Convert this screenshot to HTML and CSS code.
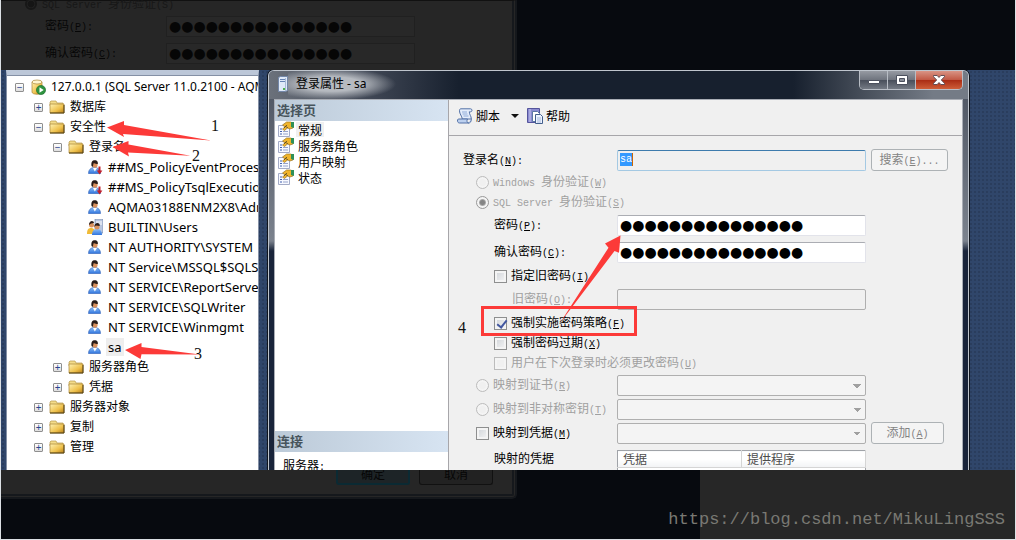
FILE: index.html
```
<!DOCTYPE html>
<html lang="zh-CN">
<head>
  <meta charset="UTF-8" />
  <title>登录属性 - sa</title>
  <link rel="stylesheet" href="styles.css">
</head>
<body>
  <!-- icons -->
  <svg class="defs" aria-hidden="true">
    <defs>
      <linearGradient id="gold" x1="0" y1="0" x2="1" y2="1">
        <stop offset="0" stop-color="#fff3b4" /><stop offset="0.6" stop-color="#eec04b" /><stop offset="1" stop-color="#b57b14" />
      </linearGradient>
      <linearGradient id="blue" x1="0" y1="0" x2="0" y2="1">
        <stop offset="0" stop-color="#8fc0f8" /><stop offset="1" stop-color="#2f74dd" />
      </linearGradient>
    </defs>
    <symbol id="folder" viewBox="0 0 16 16">
      <path d="M1 4V3l1-1h5l1 2h6v3H1z" fill="#f3dc8b" stroke="#b89a4a" stroke-width="0.7" />
      <path d="M1 5h14v9H1z" fill="url(#gold)" stroke="#a98434" stroke-width="0.7" />
      <path d="M1 14h14V6" fill="none" stroke="#4f3d12" />
    </symbol>
    <symbol id="server" viewBox="0 0 16 16">
      <path d="M2 3v10c0 3 10 3 10 0V3z" fill="url(#gold)" stroke="#a98434" stroke-width="0.7" />
      <ellipse cx="7" cy="3" rx="5" ry="2" fill="#fff6cf" stroke="#a98434" stroke-width="0.7" />
      <circle cx="11" cy="11" r="4.6" fill="#2f9440" stroke="#17692a" stroke-width="0.6" />
      <path d="M9.5 8.3v5.4l4.2-2.7z" fill="#fff" />
    </symbol>
    <symbol id="user" viewBox="0 0 16 16">
      <path d="M1.500 14.500c0-3.500 2-6 6-6s6 2.500 6 6z" fill="url(#blue)" stroke="#2a5db5" stroke-width="0.6" />
      <path d="M6 9l1.800 3.500L10 9z" fill="#fff" />
      <ellipse cx="8" cy="5.600" rx="2.600" ry="3.300" fill="#d9925f" />
      <path d="M4.500 7C4 3 5 1.200 8 1.200S11 4 10.800 5C9 5 7 3.500 6.500 4.500L5.800 8z" fill="#2a1c18" />
    </symbol>
    <symbol id="user-off" viewBox="0 0 16 16">
      <use href="#user" width="16" height="16" />
      <path d="M12.500 7.500v5" stroke="#c2202b" stroke-width="2" /><path d="M9.800 11.500h5.600l-2.800 4z" fill="#c2202b" />
    </symbol>
    <symbol id="group" viewBox="0 0 16 16">
      <path d="M8 0h8v14H8z" fill="#b9c6df" stroke="#6d7fa5" stroke-width="0.6" /><path d="M9 3h6M9 5h6" stroke="#fff" />
      <path d="M0 15c0-4 1-6 4-6s4 2 4 6z" fill="#f0bb38" /><circle cx="4.500" cy="6" r="2.500" fill="#d9925f" /><path d="M2 6c0-5 5-5 5-2l-3 .5z" fill="#2a1c18" />
      <path d="M5 16c0-4 2-6 5-6s5 2 5 6z" fill="url(#blue)" /><circle cx="10" cy="8" r="2.500" fill="#d9925f" /><path d="M7.300 8c0-5 6-5 5.500-1l-4-.5z" fill="#2a1c18" />
    </symbol>
    <symbol id="page" viewBox="0 0 16 16">
      <path d="M.5 4.500h11v11H.5z" fill="#f7f9ff" stroke="#a3abc6" />
      <path d="M2 8h2M2 10.500h2M2 13h2" stroke="#3f5fae" /><path d="M5 10.500h5M5 13h5" stroke="#96a3cb" />
      <path d="M4.500 4l4-3h4l2.500 1v5l-3 1-2.500-1-3 2.500-2-1.500 2.500-2z" fill="#f0b42c" stroke="#8b651a" stroke-width="0.6" />
      <path d="M13 1h3v6l-3-1z" fill="#2f9058" /><path d="M7 5l3 2M6 7l3-3" stroke="#58481f" stroke-width="0.8" />
    </symbol>
    <symbol id="script" viewBox="0 0 16 16">
      <path d="M3.500.8h10c2 0 2 3 0 3h-1.200c0 3 2 4 2 7.200h-9C5 8 2.500 6 2.500 3c0-1 .3-2.200 1-2.200z" fill="#e4edfb" stroke="#5371a6" />
      <path d="M1.500 11h9c-1 1.500-.5 4 1 4h-9c-2.500 0-2.500-4-1-4zM11 15c2 .5 3.500-1.500 3.300-4" fill="#bcd0ef" stroke="#5371a6" />
      <path d="M5 4h5M5.500 6h5M6.500 8h5" stroke="#8fabd8" />
    </symbol>
    <symbol id="help" viewBox="0 0 16 16">
      <path d="M.5.500h12v14H.5z" fill="#8b8bd0" stroke="#54549c" /><path d="M3 1v13" stroke="#c9c9ef" />
      <path d="M5.500 3.500h5l2 2v8h-7z" fill="#fff" stroke="#5d78a5" /><path d="M8.500 6.500h5l2 2v7h-7z" fill="#edf3ff" stroke="#435f8c" />
      <path d="M10 10h4M10 12h4M10 14h4" stroke="#8aa2cd" stroke-width="0.7" />
    </symbol>
  </svg>

  <div class="shade shade-top">
    <div class="ghost ghost-top">
      <div class="ghost-line ghost-radio"><span class="ring"></span><span><span class="en">SQL Server </span>身份验证<span class="en">(S)</span></span></div>
      <div class="ghost-line"><label for="oldPwd">密码<span class="en">(<u>P</u>):</span></label><input class="dots" id="oldPwd" type="text" value="●●●●●●●●●●●●●●●" readonly></div>
      <div class="ghost-line"><label for="oldPwd2">确认密码<span class="en">(<u>C</u>):</span></label><input class="dots" id="oldPwd2" type="text" value="●●●●●●●●●●●●●●●" readonly></div>
    </div>
  </div>

  <main class="stage">
    <aside class="explorer">
      <ul class="tree">
        <li class="l1"><button class="twist">−</button><svg><use href="#server" /></svg><span>127.0.0.1 (SQL Server 11.0.2100 - AQMA03188ENM2X8)</span></li>
        <li class="l2"><button class="twist">+</button><svg><use href="#folder" /></svg><span>数据库</span></li>
        <li class="l2"><button class="twist">−</button><svg><use href="#folder" /></svg><span>安全性</span></li>
        <li class="l3"><button class="twist">−</button><svg><use href="#folder" /></svg><span>登录名</span></li>
        <li class="l4"><svg><use href="#user-off" /></svg><span>##MS_PolicyEventProcessingLogin##</span></li>
        <li class="l4"><svg><use href="#user-off" /></svg><span>##MS_PolicyTsqlExecutionLogin##</span></li>
        <li class="l4"><svg><use href="#user" /></svg><span>AQMA03188ENM2X8\Administrator</span></li>
        <li class="l4"><svg><use href="#group" /></svg><span>BUILTIN\Users</span></li>
        <li class="l4"><svg><use href="#user" /></svg><span>NT AUTHORITY\SYSTEM</span></li>
        <li class="l4"><svg><use href="#user" /></svg><span>NT Service\MSSQL$SQLSERVER</span></li>
        <li class="l4"><svg><use href="#user" /></svg><span>NT SERVICE\ReportServer</span></li>
        <li class="l4"><svg><use href="#user" /></svg><span>NT SERVICE\SQLWriter</span></li>
        <li class="l4"><svg><use href="#user" /></svg><span>NT SERVICE\Winmgmt</span></li>
        <li class="l4"><svg><use href="#user" /></svg><span class="picked">sa</span></li>
        <li class="l3"><button class="twist">+</button><svg><use href="#folder" /></svg><span>服务器角色</span></li>
        <li class="l3"><button class="twist">+</button><svg><use href="#folder" /></svg><span>凭据</span></li>
        <li class="l2"><button class="twist">+</button><svg><use href="#folder" /></svg><span>服务器对象</span></li>
        <li class="l2"><button class="twist">+</button><svg><use href="#folder" /></svg><span>复制</span></li>
        <li class="l2"><button class="twist">+</button><svg><use href="#folder" /></svg><span>管理</span></li>
      </ul>
    </aside>

    <section class="dialog">
      <header class="titlebar">
        <svg class="title-icon" viewBox="0 0 10 16"><path d="M.5 1.500l2-1h7v14l-2 1h-7z" fill="#dfe9f8" stroke="#7387a8" /><path d="M2 3.500h5M2 5.500h5" stroke="#6784b4" /><path d="M7.500 2v13" stroke="#a9bad6" /><path d="M5 13h2" stroke="#4fb24c" stroke-width="2" /></svg>
        <h1>登录属性 - sa</h1>
        <div class="caption">
          <button aria-label="最小化"><svg viewBox="0 0 12 10"><path d="M.5 5.500h11v3H.5z" fill="#fff" stroke="#4c515e" /></svg></button>
          <button aria-label="最大化"><svg viewBox="0 0 12 10"><path d="M.5.500h11v9H.5z" fill="#fff" stroke="#4c515e" /><path d="M3.500 3.500h5v3h-5z" fill="#8b909a" stroke="#4c515e" /></svg></button>
          <button class="close" aria-label="关闭"><svg viewBox="0 0 12 10"><path d="M.5.500h3.700L6 2.500 7.800.500h3.700v1.200L8.300 5l3.200 3.300v1.200H7.800L6 7.500 4.200 9.500H.5V8.300L3.700 5 .5 1.700z" fill="#fff" stroke="#54434c" stroke-width="0.9" /></svg></button>
        </div>
      </header>

      <div class="content">
        <nav class="pages">
          <h2>选择页</h2>
          <ul>
            <li><svg><use href="#page" /></svg><a class="active" href="#general">常规</a></li>
            <li><svg><use href="#page" /></svg><a href="#roles">服务器角色</a></li>
            <li><svg><use href="#page" /></svg><a href="#mapping">用户映射</a></li>
            <li><svg><use href="#page" /></svg><a href="#status">状态</a></li>
          </ul>
          <div class="connection">
            <h2>连接</h2>
            <p>服务器<span class="en">:</span></p>
          </div>
        </nav>

        <div class="detail">
          <div class="toolbar">
            <button><svg><use href="#script" /></svg>脚本<span class="caret"></span></button>
            <button><svg><use href="#help" /></svg>帮助</button>
          </div>

          <form class="form" id="general">
            <div class="row mid">
              <label for="login"><span>登录名<span class="en">(<u>N</u>):</span></span></label>
              <div class="field focused"><input class="probe" id="login" type="text" value="sa" size="1" readonly></div>
              <button class="btn" type="button" disabled>搜索<span class="en">(<u>E</u>)...</span></button>
            </div>
            <div class="row off"><label class="in1"><input type="radio" name="auth" disabled><span><span class="en">Windows </span>身份验证<span class="en">(<u>W</u>)</span></span></label></div>
            <div class="row off"><label class="in1"><input type="radio" name="auth" checked disabled><span><span class="en">SQL Server </span>身份验证<span class="en">(<u>S</u>)</span></span></label></div>
            <div class="row tall">
              <label class="in2" for="pwd"><span>密码<span class="en">(<u>P</u>):</span></span></label>
              <input class="text dots" id="pwd" type="text" value="●●●●●●●●●●●●●●●">
            </div>
            <div class="row tall">
              <label class="in2" for="pwd2"><span>确认密码<span class="en">(<u>C</u>):</span></span></label>
              <input class="text dots" id="pwd2" type="text" value="●●●●●●●●●●●●●●●">
            </div>
            <div class="row"><label class="in2"><input type="checkbox"><span>指定旧密码<span class="en">(<u>I</u>)</span></span></label></div>
            <div class="row tall off">
              <label class="in3" for="prev"><span>旧密码<span class="en">(<u>O</u>):</span></span></label>
              <input class="text" id="prev" type="text" disabled>
            </div>
            <div class="row"><label class="in2"><input type="checkbox" checked><span>强制实施密码策略<span class="en">(<u>F</u>)</span></span></label></div>
            <div class="row"><label class="in2"><input type="checkbox"><span>强制密码过期<span class="en">(<u>X</u>)</span></span></label></div>
            <div class="row off"><label class="in2"><input type="checkbox" disabled><span>用户在下次登录时必须更改密码<span class="en">(<u>U</u>)</span></span></label></div>
            <div class="row mid off">
              <label class="in1"><input type="radio" name="auth" disabled><span>映射到证书<span class="en">(<u>R</u>)</span></span></label>
              <select aria-label="证书" disabled></select>
            </div>
            <div class="row mid off">
              <label class="in1"><input type="radio" name="auth" disabled><span>映射到非对称密钥<span class="en">(<u>T</u>)</span></span></label>
              <select aria-label="非对称密钥" disabled></select>
            </div>
            <div class="row mid">
              <label class="in1"><input type="checkbox"><span>映射到凭据<span class="en">(<u>M</u>)</span></span></label>
              <select aria-label="凭据" disabled></select>
              <button class="btn add" type="button" disabled>添加<span class="en">(<u>A</u>)</span></button>
            </div>
            <div class="row mapped">
              <span class="in2">映射的凭据</span>
              <table>
                <thead><tr><th>凭据</th><th>提供程序</th></tr></thead>
                <tbody><tr><td></td><td></td></tr></tbody>
              </table>
            </div>
          </form>
        </div>
      </div>
    </section>
  </main>

  <div class="shade shade-bottom">
    <div class="ghost ghost-bottom">
      <button class="ok">确定</button>
      <button>取消</button>
    </div>
    <div class="mark">https://blog.csdn.net/MikuLingSSS</div>
  </div>

  <!-- step arrows and numbers -->
  <svg class="notes" width="640" height="380">
    <g fill="#fc3a38">
      <path d="M107 127.500L124 121v4l87 15.600L123 134l1 3z" />
      <path d="M112.500 147L128.500 141v3.500l62 11.200L128 152.500l1 4z" />
      <path d="M125 350l16.500-7v4l58.500 7.600-58.500-.3-1 4.700z" />
      <path d="M620.500 235.500L605 243.500l3.500 4.200L560 323l54.500-72 4.500 1.700z" />
    </g>
    <rect x="482.500" y="307.500" width="153" height="27" fill="none" stroke="#fc3a38" stroke-width="3" />
    <g class="step">
      <text x="211" y="131">1</text>
      <text x="192" y="161">2</text>
      <text x="194" y="359">3</text>
      <text x="458" y="333">4</text>
    </g>
  </svg>
</body>
</html>
```
FILE: styles.css
```
* {
  box-sizing: border-box;
  margin: 0;
  padding: 0;
}

body {
  height: 100vh;
  display: flex;
  flex-direction: column;
  overflow: hidden;
  border: 1px solid #dce0e4;
  border-top: none;
  font: 12px/16px "Noto Sans CJK SC", sans-serif;
  color: #000;
  background-color: #2d4161;
}

button, input, select {
  font: inherit;
  color: inherit;
}

button {
  white-space: nowrap;
}

ul {
  list-style: none;
}

svg {
  display: block;
  width: 16px;
  height: 16px;
  flex: none;
}

.defs {
  position: absolute;
  width: 0;
  height: 0;
}

/* single-byte text next to Chinese labels */
.en {
  font-family: "Liberation Mono", monospace;
  font-size: 10px;
  white-space: pre;
}

/* dimmed bands */
.shade {
  flex: none;
  height: 70px;
  overflow: hidden;
  background-color: #070a0f;
  color: #060606;
}

.ghost {
  width: 516px;
  background-color: #262626;
  border-right: 5px double #15181c;
}

.ghost-top {
  height: 70px;
  border-top: 1px solid #111;
}

.ghost-line {
  height: 27px;
  display: grid;
  grid-template-columns: 121px 249px;
  align-items: center;
  padding-left: 44px;
}

.ghost-line input {
  height: 21px;
  padding: 0 2px;
  background-color: #282828;
  border: 1px solid #202020;
}

.ghost-radio {
  display: flex;
  height: 12px;
  gap: 5px;
  padding: 0 0 6px 24px;
  color: #171717;
}

.ring {
  width: 12px;
  height: 12px;
  border: 2px solid #171717;
  border-radius: 50%;
  background: radial-gradient(#151515 3px, #262626 4px);
}

input.dots {
  padding: 0 2px 2px;
  font: 14px/16px "DejaVu Sans", sans-serif;
}

.shade-bottom {
  height: 69px;
  display: flex;
  justify-content: space-between;
  background-color: #070a0f;
}

.ghost-bottom {
  height: 29px;
  display: flex;
  gap: 9px;
  padding-left: 335px;
  border-bottom: 5px double #15181c;
  border-radius: 0 0 5px 0;
}

.ghost-bottom button {
  width: 74px;
  height: 15px;
  line-height: 8px;
  padding-bottom: 6px;
  background-color: #222;
  border: 1px solid #111;
  border-top: none;
  border-radius: 0 0 3px 3px;
}

.ghost-bottom .ok {
  border: 2px solid #0b2a33;
  border-top: none;
  background-color: #1d2427;
}

.mark {
  width: 315px;
  display: flex;
  justify-content: flex-end;
  padding: 38px 10px 0 0;
  background-color: #272727;
  color: #797973;
  font: 17px/24px "Liberation Mono", monospace;
}

/* workspace */
.stage {
  flex: 1;
  min-height: 0;
  display: flex;
  gap: 9px;
  padding: 0 46px 0 5px;
  overflow: hidden;
  background-color: #30466a;
  background-image: radial-gradient(#2a3d5d 1px, transparent 1px);
  background-size: 4px 4px;
}

.explorer {
  flex: none;
  width: 253px;
  overflow: hidden;
  border: 1px solid #8490a5;
  border-top: 5px solid #bcc7d8;
  border-bottom: none;
  background-color: #fff;
}

.tree {
  border-top: 1px solid #8490a5;
  padding: 1px 0 0 8px;
  font-family: "Noto Sans", "Noto Sans CJK SC", sans-serif;
}

.tree li {
  height: 20px;
  display: flex;
  align-items: center;
  white-space: nowrap;
}

.tree svg {
  margin: 0 3px 0 6px;
}

.tree li span {
  padding: 1px 2px;
}

.tree .picked {
  background-color: #eee;
}

.l2 { padding-left: 19px; }
.l3 { padding-left: 38px; }
.l4 { padding-left: 66px; }

.tree .l4 { font-size: 13px; }

.twist {
  flex: none;
  width: 9px;
  height: 9px;
  line-height: 7px;
  font-size: 10px;
  text-align: center;
  color: #28468f;
  background: linear-gradient(#fff, #dedede);
  border: 1px solid #8f8f8f;
  border-radius: 1px;
}

/* login dialog */
.dialog {
  flex: 1;
  min-width: 0;
  display: flex;
  flex-direction: column;
  padding: 0 5px;
  border: 1px solid #bfc5cd;
  border-bottom: none;
  border-radius: 6px 6px 0 0;
  box-shadow: 0 0 0 1px #10151d;
  background: linear-gradient(#4b525f, #7b828d 170px, #19243a 180px);
}

.titlebar {
  flex: none;
  height: 28px;
  margin: 0 -5px;
  display: flex;
  align-items: flex-start;
  gap: 8px;
  padding-left: 9px;
  border-radius: 5px 5px 0 0;
  background: linear-gradient(90deg, #6b717b, #444b59 90px, #17202e 190px, #17202e 75%, #3d4551 83%, #747b86 95%);
}

.title-icon {
  width: 10px;
  margin-top: 5px;
}

.titlebar h1 {
  flex: 1;
  margin-left: -8px;
  padding: 5px 0 7px 8px;
  font: 12px/16px "Noto Sans", "Noto Sans CJK SC", sans-serif;
  background: radial-gradient(ellipse 64px 16px at 44px 13px, #b6bac0 45%, transparent);
}

.caption {
  display: flex;
  margin-right: 5px;
  border: 1px solid #b8bdc5;
  border-top: none;
  border-radius: 0 0 5px 5px;
  overflow: hidden;
}

.caption button {
  width: 28px;
  height: 18px;
  display: flex;
  align-items: center;
  justify-content: center;
  border: none;
  border-right: 1px solid #b8bdc5;
  background: linear-gradient(#969aa2, #70757f 48%, #484e5a 50%, #747a84);
}

.caption svg {
  width: 12px;
  height: 10px;
}

.caption .close {
  width: 46px;
  border: none;
  background: linear-gradient(#d99485, #c25a46 48%, #a92b13 50%, #ce5e38);
}

.content {
  flex: 1;
  min-height: 0;
  display: flex;
  border: 1px solid #a9adb5;
  border-bottom: none;
  background-color: #f0f0f0;
}

.pages {
  flex: none;
  width: 174px;
  display: flex;
  flex-direction: column;
  background-color: #fff;
  border-right: 1px solid #a7a6aa;
}

.pages h2 {
  height: 21px;
  padding-left: 2px;
  font-size: 13px;
  line-height: 19px;
  color: #47545c;
  background: linear-gradient(90deg, #bccad8, #d7e4f2);
}

.pages li {
  height: 16px;
  display: flex;
  align-items: center;
  gap: 2px;
  padding-left: 3px;
}

.pages a {
  padding: 0 2px;
  line-height: 15px;
  color: #000;
  text-decoration: none;
}

.pages a.active {
  background-color: #f0f0f0;
}

.connection {
  margin-top: auto;
}

.connection p {
  height: 18px;
  padding: 5px 0 0 8px;
  overflow: hidden;
}

.detail {
  flex: 1;
  min-width: 0;
}

.toolbar {
  height: 36px;
  display: flex;
  align-items: center;
  gap: 8px;
  padding: 0 8px 3px;
  border-bottom: 1px solid #a7a6aa;
}

.toolbar button {
  display: flex;
  align-items: center;
  gap: 3px;
  border: none;
  background: none;
}

.caret {
  margin-left: 8px;
  border: 4px solid transparent;
  border-top-color: #111;
  border-bottom: none;
}

.form {
  padding: 12px 14px 0;
}

.row {
  height: 20px;
  display: grid;
  grid-template-columns: 149px minmax(0, 1fr) 77px;
  column-gap: 5px;
  align-items: center;
}

.row > :first-child {
  white-space: nowrap;
}

.row.mid { height: 24px; }
.row.tall { height: 27px; }
.row.off { color: #a0a0a0; }

.row label {
  display: flex;
  align-items: center;
}

.row label input {
  flex: none;
  margin-right: 4px;
}

.row .in1 { padding-left: 13px; }
.row .in2 { padding-left: 31px; }
.row .in3 { padding-left: 49px; }

.text, .field, .form select {
  width: 100%;
  height: 21px;
  padding: 0 3px;
  border: 1px solid #e2e3ea;
  border-top-color: #abadb3;
  border-radius: 2px;
  background-color: #fff;
}

.text:disabled, .form select {
  border-color: #afafaf;
  background-color: #f4f4f4;
}

.text:disabled {
  background-color: #f0f0f0;
}

.field.focused {
  display: flex;
  padding: 2px;
  border-color: #a4c9e3;
  border-top-color: #3d7bad;
  background-color: #f0f0f0;
}

.probe {
  width: 13px;
  height: 13px;
  border: none;
  border-right: 1px solid #cc6600;
  background-color: #3399ff;
  color: #fff;
  font: 10px/12px "Liberation Mono", monospace;
}

.form select {
  appearance: none;
  background-image: linear-gradient(45deg, transparent 50%, #a0a0a0 50%), linear-gradient(-45deg, transparent 50%, #a0a0a0 50%);
  background-size: 4px 4px;
  background-position: right 8px top 8px, right 4px top 8px;
  background-repeat: no-repeat;
  opacity: 1;
}

.btn {
  height: 22px;
  border: 1px solid #adb2b5;
  border-radius: 3px;
  background-color: #f4f4f4;
  color: #838383;
}

.btn.add {
  width: 73px;
}

input[type="radio"], input[type="checkbox"] {
  appearance: none;
  width: 13px;
  height: 13px;
  border: 1px solid #8e8f8f;
  background: linear-gradient(135deg, #cfd3d8, #f6f6f6);
  box-shadow: inset 0 0 0 2px #f4f4f4;
}

input[type="radio"] {
  border-radius: 50%;
}

input:disabled[type="radio"], input:disabled[type="checkbox"] {
  border-color: #bcbcbc;
  background: #f0f0f0;
}

input:disabled[type="radio"]:checked {
  border-color: #999;
  background: radial-gradient(#858585 2px, #c9c9c9 4px, #eee 5px);
}

input[type="checkbox"]:checked::before {
  content: "";
  display: block;
  width: 4px;
  height: 8px;
  margin: 0 0 0 4px;
  border: solid #4257a0;
  border-width: 0 2px 2px 0;
  transform: rotate(38deg);
}

.row.mapped {
  align-items: start;
  padding-top: 5px;
}

.row table {
  width: 100%;
  table-layout: fixed;
  border-collapse: collapse;
  border: 1px solid #a0a3a8;
  background-color: #fff;
}

.row th {
  height: 17px;
  padding-left: 5px;
  text-align: left;
  font-weight: normal;
  color: #4c4c4c;
  border: solid #d5d5d5;
  border-width: 0 1px 1px 0;
  background: linear-gradient(#fff 50%, #f2f3f5);
}

.row td {
  height: 20px;
}

/* annotations float above the workspace */
.notes {
  position: absolute;
  top: 0;
  left: 0;
  width: 640px;
  height: 380px;
  pointer-events: none;
}

.step {
  font: 16px "Liberation Serif", serif;
  fill: #111;
}
```
